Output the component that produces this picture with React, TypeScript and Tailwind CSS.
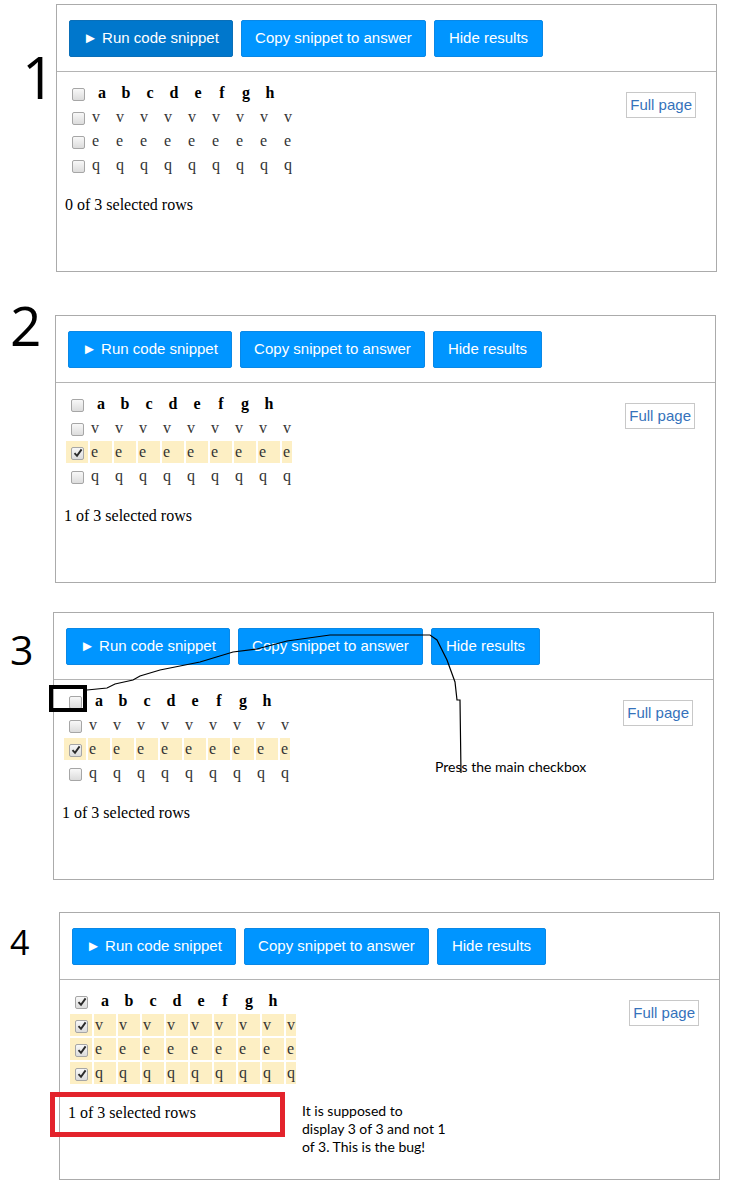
import React from "react";

const heads = ["a", "b", "c", "d", "e", "f", "g", "h"];
const rows = ["v", "e", "q"];

const Check = ({ checked }: { checked?: boolean }) => (
    <span className="relative inline-block w-[13px] h-[13px] align-middle border border-[#a6a6a6] rounded-[2px] bg-linear-to-b from-[#f8f8f8] to-[#dcdcdc]">
        {checked ? (
            <svg className="absolute left-[1px] top-[0px]" width="10" height="10" viewBox="0 0 10 10">
                <path d="M1.5 5.2 L4 7.8 L8.6 1.4" fill="none" stroke="#2b2b2b" strokeWidth="1.9" />
            </svg>
        ) : null}
    </span>
);

type TableProps = { checked: boolean[]; headChecked?: boolean; marked?: boolean };

const SnippetTable = ({ checked, headChecked, marked }: TableProps) => (
    <table className="border-separate border-spacing-[2px] font-['Liberation_Serif',serif] text-[16px] leading-[20px]">
        <tbody>
            <tr className="h-[22px]">
                <td className="relative w-[22px] p-px pl-[5px]">
                    <Check checked={headChecked} />
                    {marked ? <span className="absolute left-[-15px] top-[-5px] w-[38px] h-[27px] border-4 border-black"></span> : null}
                </td>
                {heads.map((h) => (
                    <th key={h} className="w-[22px] p-px text-center font-bold text-black">{h}</th>
                ))}
            </tr>
            {rows.map((r, i) => (
                <tr key={r} className="h-[22px]">
                    <td className={`w-[22px] p-px pl-[5px] ${checked[i] ? "bg-[#fdefc4]" : ""}`}>
                        <Check checked={checked[i]} />
                    </td>
                    {Array.from({ length: 9 }).map((_, j) => (
                        <td key={j} className={`p-px text-left text-[#333] ${j < 8 ? "w-[22px]" : ""} ${checked[i] ? "bg-[#fdefc4]" : ""}`}>{r}</td>
                    ))}
                </tr>
            ))}
        </tbody>
    </table>
);

const Btn = ({ label, w, dark }: { label: string; w: string; dark?: boolean }) => (
    <button className={`h-[37px] ${w} rounded-[2px] border text-[15px] text-white font-['Liberation_Sans',sans-serif] ${dark ? "bg-[#0077cc] border-[#0a6fb8]" : "bg-[#0095ff] border-[#0a88e6]"}`}>
        {label}
    </button>
);

type BoxProps = {
    runDark?: boolean;
    checked: boolean[];
    headChecked?: boolean;
    marked?: boolean;
    status: string;
    note?: boolean;
    bug?: boolean;
};

const SnippetBox = ({ runDark, checked, headChecked, marked, status, note, bug }: BoxProps) => (
    <div className="w-[661px] h-[268px] shrink-0 border border-[#ababab] bg-white">
        <div className="flex gap-2 pl-[12px] pt-[15px] pb-[14px] border-b border-[#b4b4b4]">
            <Btn label="► Run code snippet" w="w-[164px]" dark={runDark} />
            <Btn label="Copy snippet to answer" w="w-[185px]" />
            <Btn label="Hide results" w="w-[109px]" />
        </div>
        <div className="flex items-start px-2 pt-2">
            <div>
                <SnippetTable checked={checked} headChecked={headChecked} marked={marked} />
                <div className="mt-[18px] flex items-start">
                    <div className="relative w-[234px] font-['Liberation_Serif',serif] text-[16px] leading-[18px] text-black">
                        {status}
                        {bug ? <span className="absolute left-[-18px] top-[-12px] w-[235px] h-[45px] border-[5px] border-[#e3232c]"></span> : null}
                    </div>
                    {bug ? (
                        <div className="mt-[-2px] font-['Lato',sans-serif] text-[14px] leading-[18px] text-black">
                            It is supposed to<br />display 3 of 3 and not 1<br />of 3. This is the bug!
                        </div>
                    ) : null}
                </div>
            </div>
            {note ? (
                <div className="ml-[139px] mt-[70px] font-['Lato',sans-serif] text-[14px] leading-[18px] text-black">Press the main checkbox</div>
            ) : null}
            <a className="ml-auto mt-[12px] mr-[12px] border border-[#c8c8c8] px-[3px] py-[3px] font-['Liberation_Sans',sans-serif] text-[15px] leading-[18px] text-[#3572bb]">Full page</a>
        </div>
    </div>
);

const Num = ({ n, cls }: { n: string; cls: string }) => (
    <div className={`shrink-0 font-['Open_Sans',sans-serif] leading-none text-black ${cls}`}>{n}</div>
);

export default function App() {
    return (
        <div className="relative w-[746px] h-[1196px] bg-white overflow-hidden">
            <div className="flex items-start">
                <Num n="1" cls="w-[56px] pl-[22px] mt-[48px] text-[58px]" />
                <div className="mt-[4px]">
                    <SnippetBox runDark checked={[false, false, false]} status="0 of 3 selected rows" />
                </div>
            </div>
            <div className="flex items-start mt-[43px]">
                <Num n="2" cls="w-[55px] pl-[10px] mt-[-18px] text-[55px]" />
                <SnippetBox checked={[false, true, false]} status="1 of 3 selected rows" />
            </div>
            <div className="flex items-start mt-[29px]">
                <Num n="3" cls="w-[53px] pl-[10px] mt-[17px] text-[41px]" />
                <SnippetBox checked={[false, true, false]} marked note status="1 of 3 selected rows" />
            </div>
            <div className="flex items-start mt-[32px]">
                <Num n="4" cls="w-[59px] pl-[10px] mt-[13px] text-[34px]" />
                <SnippetBox checked={[true, true, true]} headChecked bug status="1 of 3 selected rows" />
            </div>
            <svg className="pointer-events-none absolute left-0 top-0" width="746" height="1196">
                <polyline
                    points="87,690 107,688 115,684 133,680 140,676 160,670 200,662 233,652 257,649 287,641 330,635 430,635 437,640 447,660 455,682 457,700 460,700 461,773"
                    fill="none"
                    stroke="#000"
                    strokeWidth="1.2"
                />
            </svg>
        </div>
    );
}
